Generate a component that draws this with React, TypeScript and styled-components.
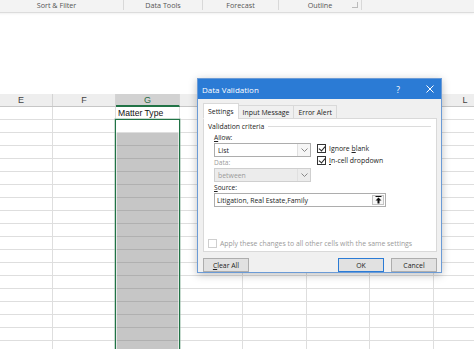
import React from 'react';
import styled, { createGlobalStyle } from 'styled-components';

const GlobalStyle = createGlobalStyle`
  html, body {
    margin: 0;
    padding: 0;
    background: #ffffff;
  }
  body {
    width: 474px;
    height: 349px;
    overflow: hidden;
    font-family: "Open Sans", "Noto Sans", sans-serif;
  }
`;

const ribbonGroups = [
  { label: 'Sort & Filter', width: 134, launcher: false },
  { label: 'Data Tools', width: 79, launcher: false },
  { label: 'Forecast', width: 76, launcher: false },
  { label: 'Outline', width: 83, launcher: true },
];

const columns = [
  { name: 'E', width: 63 },
  { name: 'F', width: 63 },
  { name: 'G', width: 64 },
  { name: 'H', width: 63 },
  { name: 'I', width: 64 },
  { name: 'J', width: 63 },
  { name: 'K', width: 64 },
  { name: 'L', width: 63 },
];

const ROW_COUNT = 20;

type CellState = 'normal' | 'active' | 'selected';

const getCellState = (row: number, col: string): CellState => {
  if (col !== 'G') return 'normal';
  if (row === 1) return 'active';
  if (row > 1) return 'selected';
  return 'normal';
};

export default function App() {
  return (
    <Page>
      <GlobalStyle />
      <Ribbon>
        {ribbonGroups.map((g) => (
          <RibbonGroup key={g.label} $width={g.width}>
            <RibbonLabel>{g.label}</RibbonLabel>
            {g.launcher && <Launcher />}
          </RibbonGroup>
        ))}
      </Ribbon>
      <FormulaSpace />
      <Sheet>
        <HeaderRow>
          {columns.map((c) => (
            <HeaderCell key={c.name} $width={c.width} $selected={c.name === 'G'}>
              {c.name}
            </HeaderCell>
          ))}
        </HeaderRow>
        {Array.from({ length: ROW_COUNT }).map((_, r) => (
          <Row key={r}>
            {columns.map((c) => (
              <Cell key={c.name} $width={c.width} $state={getCellState(r, c.name)}>
                {r === 0 && c.name === 'G' ? 'Matter Type' : ''}
              </Cell>
            ))}
          </Row>
        ))}
        <SelectionBorder />
      </Sheet>

      <Dialog>
        <TitleBar>
          <TitleText>Data Validation</TitleText>
          <TitleButtons>
            <TitleButton>?</TitleButton>
            <TitleButton>
              <svg width="8" height="8" viewBox="0 0 8 8">
                <path d="M0.5 0.5 L7.5 7.5 M7.5 0.5 L0.5 7.5" stroke="#fff" strokeWidth="1" />
              </svg>
            </TitleButton>
          </TitleButtons>
        </TitleBar>
        <DialogBody>
          <Tabs>
            <Tab $active>Settings</Tab>
            <Tab>Input Message</Tab>
            <Tab>Error Alert</Tab>
          </Tabs>
          <TabPanel>
            <GroupTitle>
              <span>Validation criteria</span>
              <GroupLine />
            </GroupTitle>
            <CriteriaGrid>
              <FieldColumn>
                <FieldLabel><u>A</u>llow:</FieldLabel>
                <SelectBox>
                  <SelectValue>List</SelectValue>
                  <Arrow>
                    <Chevron />
                  </Arrow>
                </SelectBox>
                <FieldLabel $disabled>Data:</FieldLabel>
                <SelectBox $disabled>
                  <SelectValue $disabled>between</SelectValue>
                  <Arrow $disabled>
                    <Chevron />
                  </Arrow>
                </SelectBox>
              </FieldColumn>
              <CheckColumn>
                <CheckRow>
                  <CheckBox $checked />
                  <CheckLabel>Ignore <u>b</u>lank</CheckLabel>
                </CheckRow>
                <CheckRow>
                  <CheckBox $checked />
                  <CheckLabel><u>I</u>n-cell dropdown</CheckLabel>
                </CheckRow>
              </CheckColumn>
            </CriteriaGrid>
            <FieldLabel $indent><u>S</u>ource:</FieldLabel>
            <SourceBox>
              <SourceText>Litigation, Real Estate,Family</SourceText>
              <CollapseButton>
                <svg width="7" height="8" viewBox="0 0 7 8">
                  <rect x="0.5" y="0" width="6" height="1" fill="#111" />
                  <path d="M3.5 1.5 L6.5 4.5 H4.5 V7.5 H2.5 V4.5 H0.5 Z" fill="#111" />
                </svg>
              </CollapseButton>
            </SourceBox>
            <Spacer />
            <ApplyRow>
              <CheckBox $disabled />
              <ApplyText>Apply these changes to all other cells with the same settings</ApplyText>
            </ApplyRow>
          </TabPanel>
          <ButtonRow>
            <DialogButton><u>C</u>lear All</DialogButton>
            <ButtonGroup>
              <DialogButton $default>OK</DialogButton>
              <DialogButton>Cancel</DialogButton>
            </ButtonGroup>
          </ButtonRow>
        </DialogBody>
      </Dialog>
    </Page>
  );
}

const Chevron = () => (
  <svg width="7" height="4" viewBox="0 0 7 4">
    <path d="M0.5 0.5 L3.5 3.5 L6.5 0.5" stroke="#888" strokeWidth="1" fill="none" />
  </svg>
);

const Page = styled.div`
  position: relative;
  width: 474px;
  height: 349px;
  overflow: hidden;
  background: #fff;
`;

const Ribbon = styled.div`
  display: flex;
  align-items: flex-start;
  height: 13px;
  box-sizing: border-box;
  background: #f3f3f3;
  border-bottom: 1px solid #dcdcdc;
  box-shadow: 0 1px 2px rgba(0, 0, 0, 0.06);
  margin-left: -10px;
`;

const RibbonGroup = styled.div<{ $width: number }>`
  position: relative;
  width: ${(p) => p.$width}px;
  flex-shrink: 0;
  display: flex;
  justify-content: center;
  align-items: center;
  border-right: 1px solid #d8d8d8;
  box-sizing: border-box;
  height: 10px;
`;

const RibbonLabel = styled.span`
  font-size: 7.2px;
  color: #555;
  line-height: 10px;
`;

const Launcher = styled.span`
  position: absolute;
  right: 3px;
  top: 2px;
  width: 5px;
  height: 5px;
  border: 1px solid #bbb;
  border-top: none;
  border-left: none;
`;

const FormulaSpace = styled.div`
  height: 81px;
`;

const Sheet = styled.div`
  position: relative;
  margin-left: -10px;
`;

const HeaderRow = styled.div`
  display: flex;
  height: 13px;
  background: #eeeeee;
  border-bottom: 1px solid #c6c6c6;
  box-sizing: border-box;
`;

const HeaderCell = styled.div<{ $width: number; $selected?: boolean }>`
  width: ${(p) => p.$width}px;
  flex-shrink: 0;
  box-sizing: border-box;
  border-right: 1px solid #d4d4d4;
  font-family: "Liberation Sans", Arial, sans-serif;
  font-size: 9px;
  line-height: 12px;
  text-align: center;
  color: ${(p) => (p.$selected ? '#2a6a45' : '#444')};
  background: ${(p) => (p.$selected ? '#d2d2d2' : 'transparent')};
  border-bottom: ${(p) => (p.$selected ? '2px solid #217346' : 'none')};
  margin-bottom: ${(p) => (p.$selected ? '-1px' : '0')};
`;

const Row = styled.div`
  display: flex;
  height: 13px;
`;

const Cell = styled.div<{ $width: number; $state: CellState }>`
  width: ${(p) => p.$width}px;
  flex-shrink: 0;
  box-sizing: border-box;
  border-right: 1px solid #dedede;
  border-bottom: 1px solid ${(p) => (p.$state === 'selected' ? '#b0b0b0' : '#dedede')};
  background: ${(p) => (p.$state === 'selected' ? '#c6c6c6' : '#fff')};
  font-family: "Liberation Sans", Arial, sans-serif;
  font-size: 8.6px;
  line-height: 13px;
  padding-left: 2px;
  color: #111;
  white-space: nowrap;
`;

const SelectionBorder = styled.div`
  position: absolute;
  left: 125px;
  top: 25px;
  width: 65px;
  height: 300px;
  box-sizing: border-box;
  border: 1px solid #217346;
  box-shadow: inset 0 0 0 1px rgba(255, 255, 255, 0.6), 0 0 0 0.5px #8fb7a0;
  pointer-events: none;
`;

const Dialog = styled.div`
  position: absolute;
  left: 197px;
  top: 78px;
  width: 245px;
  height: 195px;
  box-sizing: border-box;
  border: 1px solid #6b9bd6;
  background: #f0f0f0;
  box-shadow: 0 2px 8px rgba(0, 0, 0, 0.25);
  display: flex;
  flex-direction: column;
  font-family: "Open Sans", "Noto Sans", sans-serif;
`;

const TitleBar = styled.div`
  height: 20px;
  background: #2b7bd5;
  display: flex;
  align-items: center;
  justify-content: space-between;
  padding: 0 7px 0 4px;
  flex-shrink: 0;
`;

const TitleText = styled.span`
  color: #fff;
  font-size: 8px;
`;

const TitleButtons = styled.div`
  display: flex;
  align-items: center;
  gap: 26px;
`;

const TitleButton = styled.span`
  color: #fff;
  font-size: 8.5px;
  display: flex;
  align-items: center;
`;

const DialogBody = styled.div`
  flex: 1;
  display: flex;
  flex-direction: column;
  padding: 3px 4px 4px 5px;
`;

const Tabs = styled.div`
  display: flex;
  align-items: flex-end;
  height: 16px;
  position: relative;
  z-index: 1;
`;

const Tab = styled.div<{ $active?: boolean }>`
  font-size: 6.9px;
  color: #222;
  padding: 0 4px;
  height: ${(p) => (p.$active ? '16px' : '14px')};
  line-height: ${(p) => (p.$active ? '16px' : '14px')};
  box-sizing: border-box;
  border: 1px solid #d9d9d9;
  border-bottom: ${(p) => (p.$active ? '1px solid #fff' : '1px solid #d9d9d9')};
  background: ${(p) => (p.$active ? '#fff' : '#f0f0f0')};
  margin-right: -1px;
  margin-bottom: -1px;
`;

const TabPanel = styled.div`
  height: 134px;
  box-sizing: border-box;
  background: #fff;
  border: 1px solid #d9d9d9;
  padding: 2px 5px 3px 4px;
  display: flex;
  flex-direction: column;
  font-size: 6.9px;
  color: #222;
`;

const GroupTitle = styled.div`
  display: flex;
  align-items: center;
  gap: 4px;
  line-height: 11px;
`;

const GroupLine = styled.div`
  flex: 1;
  height: 1px;
  background: #dcdcdc;
`;

const CriteriaGrid = styled.div`
  display: flex;
  padding-left: 6px;
  gap: 6px;
`;

const FieldColumn = styled.div`
  display: flex;
  flex-direction: column;
  width: 97px;
`;

const FieldLabel = styled.div<{ $disabled?: boolean; $indent?: boolean }>`
  line-height: 10px;
  height: 10px;
  margin-top: 1px;
  color: ${(p) => (p.$disabled ? '#9a9a9a' : '#222')};
  padding-left: ${(p) => (p.$indent ? '6px' : '0')};
  font-size: 6.6px;
`;

const SelectBox = styled.div<{ $disabled?: boolean }>`
  height: 14px;
  box-sizing: border-box;
  border: 1px solid ${(p) => (p.$disabled ? '#cfcfcf' : '#adadad')};
  background: ${(p) => (p.$disabled ? '#ececec' : '#fff')};
  display: flex;
  align-items: center;
`;

const SelectValue = styled.span<{ $disabled?: boolean }>`
  flex: 1;
  padding-left: 3px;
  font-size: 6.9px;
  color: ${(p) => (p.$disabled ? '#9a9a9a' : '#222')};
`;

const Arrow = styled.span<{ $disabled?: boolean }>`
  width: 13px;
  height: 12px;
  box-sizing: border-box;
  border-left: 1px solid #e0e0e0;
  background: ${(p) => (p.$disabled ? '#ececec' : '#f6f6f6')};
  display: flex;
  align-items: center;
  justify-content: center;
`;

const CheckColumn = styled.div`
  display: flex;
  flex-direction: column;
  padding-top: 11px;
  gap: 2px;
`;

const CheckRow = styled.div`
  display: flex;
  align-items: center;
  gap: 3px;
  height: 10px;
`;

const CheckBox = styled.span<{ $checked?: boolean; $disabled?: boolean }>`
  position: relative;
  width: 9px;
  height: 9px;
  box-sizing: border-box;
  border: 1px solid ${(p) => (p.$disabled ? '#cfcfcf' : '#333')};
  background: #fff;
  flex-shrink: 0;
  &::after {
    content: '';
    display: ${(p) => (p.$checked ? 'block' : 'none')};
    position: absolute;
    left: 2px;
    top: 0px;
    width: 3px;
    height: 5px;
    border-right: 1px solid #222;
    border-bottom: 1px solid #222;
    transform: rotate(40deg);
  }
`;

const CheckLabel = styled.span`
  font-size: 6.9px;
  color: #222;
`;

const SourceBox = styled.div`
  margin-left: 6px;
  width: 172px;
  height: 14px;
  box-sizing: border-box;
  border: 1px solid #adadad;
  display: flex;
  align-items: center;
  justify-content: space-between;
  padding: 0 1px 0 2px;
`;

const SourceText = styled.span`
  font-size: 6.9px;
  color: #222;
`;

const CollapseButton = styled.span`
  width: 12px;
  height: 10px;
  box-sizing: border-box;
  border: 1px solid #c4c4c4;
  background: #f7f7f7;
  display: flex;
  align-items: center;
  justify-content: center;
`;

const Spacer = styled.div`
  flex: 1;
`;

const ApplyRow = styled.div`
  display: flex;
  align-items: center;
  gap: 3px;
`;

const ApplyText = styled.span`
  font-size: 6.9px;
  color: #9a9a9a;
  white-space: nowrap;
`;

const ButtonRow = styled.div`
  display: flex;
  justify-content: space-between;
  margin-top: 6px;
`;

const ButtonGroup = styled.div`
  display: flex;
  gap: 7px;
`;

const DialogButton = styled.div<{ $default?: boolean }>`
  width: 46px;
  height: 14px;
  box-sizing: border-box;
  border: 1px solid ${(p) => (p.$default ? '#2b7bd5' : '#adadad')};
  background: #e1e1e1;
  font-size: 6.9px;
  color: #222;
  display: flex;
  align-items: center;
  justify-content: center;
`;
